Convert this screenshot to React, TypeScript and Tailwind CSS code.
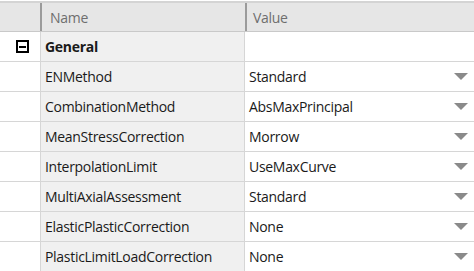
import React from 'react';

const rows = [
  { name: 'ENMethod', value: 'Standard' },
  { name: 'CombinationMethod', value: 'AbsMaxPrincipal' },
  { name: 'MeanStressCorrection', value: 'Morrow' },
  { name: 'InterpolationLimit', value: 'UseMaxCurve' },
  { name: 'MultiAxialAssessment', value: 'Standard' },
  { name: 'ElasticPlasticCorrection', value: 'None' },
  { name: 'PlasticLimitLoadCorrection', value: 'None' },
];

const Arrow: React.FC = () => (
  <svg width="14" height="8" viewBox="0 0 14 8" className="shrink-0">
    <path d="M0 0 L14 0 L7 7 Z" fill="#8a8a8a" />
  </svg>
);

const App: React.FC = () => {
  return (
    <div
      className="w-[474px] h-[271px] overflow-hidden bg-white text-[14px] tracking-[-0.3px] text-[#1a1a1a]"
      style={{ fontFamily: '"Open Sans", "Noto Sans", sans-serif' }}
    >
      <div className="mt-[1px] border-t-2 border-[#d4d4d4]">
        {/* header */}
        <div className="flex h-[29px] bg-[#e6e6e6] border-b border-[#c9c9c9]">
          <div className="w-[42px] border-r-2 border-[#9b9b9b]" />
          <div className="w-[205px] flex items-center pl-[8px] text-[#6e6e6e] border-r-2 border-[#9b9b9b]">
            Name
          </div>
          <div className="flex-1 flex items-center pl-[6px] text-[#6e6e6e]">Value</div>
        </div>

        {/* group row */}
        <div className="flex h-[30px] border-b border-[#d6d6d6]">
          <div className="w-[41px] flex items-center pl-[16px] border-r border-[#d6d6d6]">
            <div className="w-[13px] h-[13px] border-2 border-black flex items-center justify-center">
              <div className="w-[7px] h-[2px] bg-black" />
            </div>
          </div>
          <div className="w-[204px] flex items-center pl-[4px] font-bold bg-[#f0f0f0] border-r border-[#d6d6d6]">
            General
          </div>
          <div className="flex-1" />
        </div>

        {rows.map((row) => (
          <div key={row.name} className="flex h-[30px] border-b border-[#d6d6d6]">
            <div className="w-[41px] border-r border-[#d6d6d6]" />
            <div className="w-[204px] flex items-center pl-[4px] bg-[#f0f0f0] border-r border-[#d6d6d6]">
              {row.name}
            </div>
            <div className="flex-1 flex items-center justify-between pl-[4px] pr-[6px]">
              <span>{row.value}</span>
              <Arrow />
            </div>
          </div>
        ))}
        <div className="h-[10px] bg-[#e6e6e6]" />
      </div>
    </div>
  );
};

export default App;
